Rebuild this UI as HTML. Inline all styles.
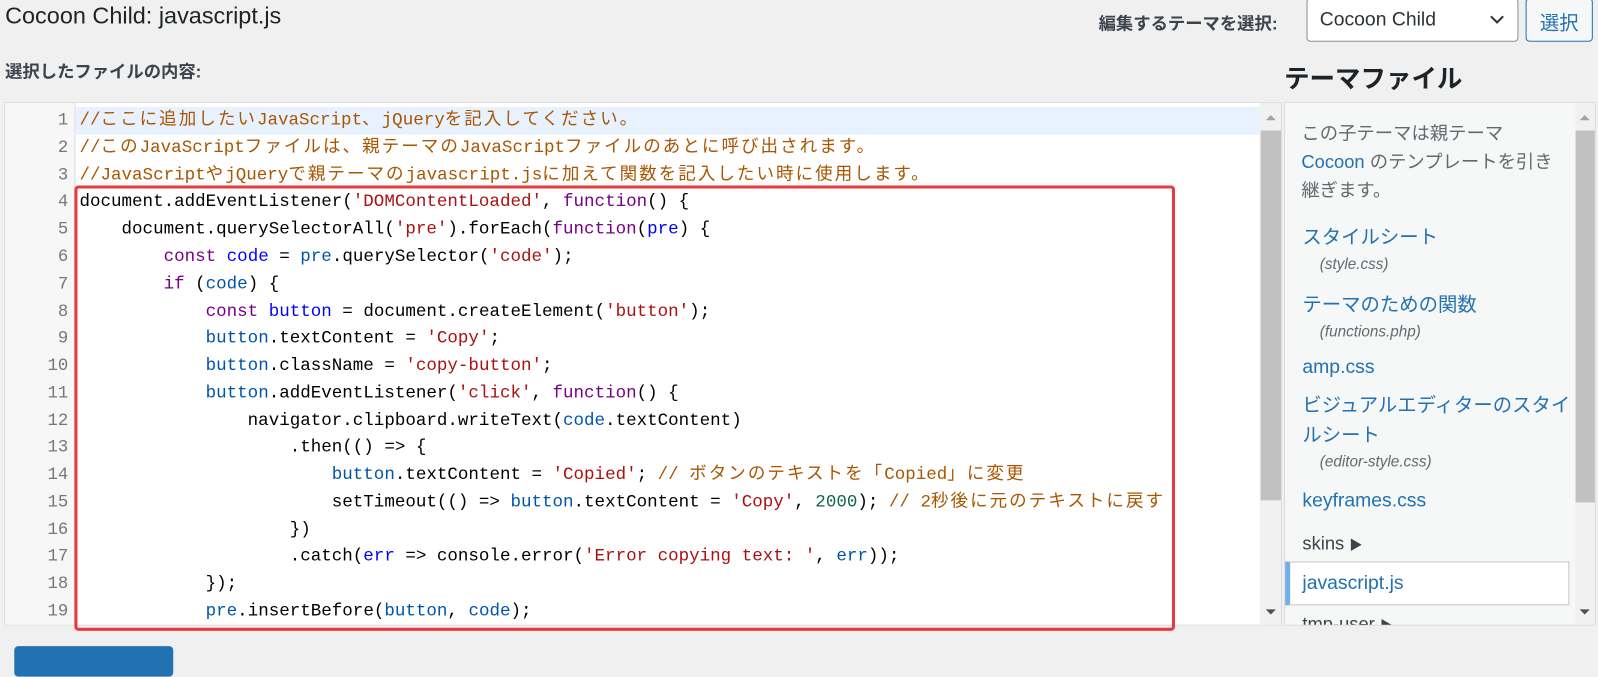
<!DOCTYPE html>
<html><head><meta charset="utf-8"><style>
body{margin:0;width:1598px;height:654px;background:#f0f0f1;overflow:hidden;font-family:"Liberation Sans","Noto Sans CJK JP",sans-serif;color:#1d2327}
#w{position:absolute;left:0;top:0;width:1568px;height:642px;transform:scale(1.0191);transform-origin:0 0}
.abs{position:absolute}
h1{position:absolute;left:5px;top:2px;margin:0;font-size:23px;font-weight:400}
.lbl{left:5px;top:56px;font-size:17px;font-weight:700;color:#3c434a}
.ed{left:4px;top:100px;width:1254px;height:514px;background:#fff;border:1px solid #dcdcde;box-sizing:border-box;overflow:hidden}
.gut{left:0;top:0;width:68px;height:514px;background:#f7f7f7;border-right:1px solid #ddd}
.ln{position:absolute;left:0;width:62px;text-align:right;font-family:"Liberation Mono",monospace;font-size:17px;color:#777;line-height:27px}
.cl{position:absolute;left:73px;white-space:pre;font-family:"Liberation Mono","Noto Sans CJK JP",monospace;font-size:17.2px;line-height:27px;color:#000}
.j{letter-spacing:2px}
.c{color:#a50}.s{color:#a11}.k{color:#708}.d{color:#00f}.v{color:#05a}
.side{left:1260px;top:100px;width:306px;height:514px;background:#f6f7f7;border:1px solid #dcdcde;box-sizing:border-box;overflow:hidden}
.sb a{color:#2271b1;text-decoration:none}
</style></head><body><div id="w">
<h1>Cocoon Child: javascript.js</h1>
<div class="abs lbl">選択したファイルの内容:</div>
<div class="abs" style="left:1078px;top:9px;font-size:17px;font-weight:700;color:#3c434a">編集するテーマを選択:</div>
<div class="abs" style="left:1282px;top:-2px;width:208px;height:43px;background:#fff;border:1px solid #8c8f94;border-radius:4px;box-sizing:border-box;font-size:19px;padding:10px 0 0 12px;color:#2c3338">Cocoon Child
<svg class="abs" style="left:178px;top:14px" width="16" height="12" viewBox="0 0 16 12"><path d="M2 3l6 6 6-6" stroke="#2c3338" stroke-width="2" fill="none"/></svg></div>
<div class="abs" style="left:1497px;top:-2px;width:66px;height:43px;border:1px solid #2271b1;border-radius:4px;box-sizing:border-box;background:#f6f7f7;color:#2271b1;font-size:19px;text-align:center;padding-top:9px">選択</div>
<div class="abs" style="left:1260px;top:58px;font-size:25px;font-weight:700">テーマファイル</div>

<div class="abs ed">
<div class="abs gut"></div>
<div class="abs" style="left:69px;top:4px;width:1162px;height:27px;background:#e8f2fe"></div>
<div class="ln" style="top:4px">1</div><div class="ln" style="top:31px">2</div><div class="ln" style="top:58px">3</div><div class="ln" style="top:84px">4</div><div class="ln" style="top:111px">5</div><div class="ln" style="top:138px">6</div><div class="ln" style="top:165px">7</div><div class="ln" style="top:192px">8</div><div class="ln" style="top:218px">9</div><div class="ln" style="top:245px">10</div><div class="ln" style="top:272px">11</div><div class="ln" style="top:299px">12</div><div class="ln" style="top:325px">13</div><div class="ln" style="top:352px">14</div><div class="ln" style="top:379px">15</div><div class="ln" style="top:406px">16</div><div class="ln" style="top:432px">17</div><div class="ln" style="top:459px">18</div><div class="ln" style="top:486px">19</div>
<div class="cl c" style="top:4px">//<span class="j">ここに追加したい</span>JavaScript<span class="j">、</span>jQuery<span class="j">を記入してください。</span></div>
<div class="cl c" style="top:31px">//<span class="j">この</span>JavaScript<span class="j">ファイルは、親テーマの</span>JavaScript<span class="j">ファイルのあとに呼び出されます。</span></div>
<div class="cl c" style="top:58px">//JavaScript<span class="j">や</span>jQuery<span class="j">で親テーマの</span>javascript.js<span class="j">に加えて関数を記入したい時に使用します。</span></div>
<div class="cl" style="top:84px">document.addEventListener(<span class="s">'DOMContentLoaded'</span>, <span class="k">function</span>() {</div>
<div class="cl" style="top:111px">    document.querySelectorAll(<span class="s">'pre'</span>).forEach(<span class="k">function</span>(<span class="d">pre</span>) {</div>
<div class="cl" style="top:138px">        <span class="k">const</span> <span class="d">code</span> = <span class="v">pre</span>.querySelector(<span class="s">'code'</span>);</div>
<div class="cl" style="top:165px">        <span class="k">if</span> (<span class="v">code</span>) {</div>
<div class="cl" style="top:192px">            <span class="k">const</span> <span class="d">button</span> = document.createElement(<span class="s">'button'</span>);</div>
<div class="cl" style="top:218px">            <span class="v">button</span>.textContent = <span class="s">'Copy'</span>;</div>
<div class="cl" style="top:245px">            <span class="v">button</span>.className = <span class="s">'copy-button'</span>;</div>
<div class="cl" style="top:272px">            <span class="v">button</span>.addEventListener(<span class="s">'click'</span>, <span class="k">function</span>() {</div>
<div class="cl" style="top:299px">                navigator.clipboard.writeText(<span class="v">code</span>.textContent)</div>
<div class="cl" style="top:325px">                    .then(() =&gt; {</div>
<div class="cl" style="top:352px">                        <span class="v">button</span>.textContent = <span class="s">'Copied'</span>; <span class="c">// <span class="j">ボタンのテキストを「</span>Copied<span class="j">」に変更</span></span></div>
<div class="cl" style="top:379px">                        setTimeout(() =&gt; <span class="v">button</span>.textContent = <span class="s">'Copy'</span>, <span style="color:#164">2000</span>); <span class="c">// 2<span class="j">秒後に元のテキストに戻す</span></span></div>
<div class="cl" style="top:406px">                    })</div>
<div class="cl" style="top:432px">                    .catch(<span class="d">err</span> =&gt; console.error(<span class="s">'Error copying text: '</span>, <span class="v">err</span>));</div>
<div class="cl" style="top:459px">            });</div>
<div class="cl" style="top:486px">            <span class="v">pre</span>.insertBefore(<span class="v">button</span>, <span class="v">code</span>);</div>
<div class="abs" style="left:1231px;top:0;width:22px;height:514px;background:#f1f1f1"></div>
<div class="abs" style="left:1232px;top:27px;width:20px;height:363px;background:#c1c1c1"></div>
<svg class="abs" style="left:1236px;top:10px" width="12" height="8"><path d="M1 7L6 2 11 7Z" fill="#a3a3a3"/></svg>
<svg class="abs" style="left:1236px;top:496px" width="12" height="8"><path d="M1 1L6 6 11 1Z" fill="#505050"/></svg>
</div>
<div class="abs" style="left:73px;top:182px;width:1080px;height:437px;border:3px solid #e8393d;border-radius:4px;box-sizing:border-box"></div>

<div class="abs side sb">
<div class="abs" style="left:16px;top:16px;width:260px;font-size:18px;line-height:28px;color:#646970">この子テーマは親テーマ <a>Cocoon</a> のテンプレートを引き継ぎます。</div>
<div class="abs" style="left:17px;top:117px;font-size:19px"><a>スタイルシート</a></div>
<div class="abs" style="left:34px;top:150px;font-size:15px;font-style:italic;color:#646970">(style.css)</div>
<div class="abs" style="left:17px;top:183px;font-size:19px"><a>テーマのための関数</a></div>
<div class="abs" style="left:34px;top:216px;font-size:15px;font-style:italic;color:#646970">(functions.php)</div>
<div class="abs" style="left:17px;top:249px;font-size:19px"><a>amp.css</a></div>
<div class="abs" style="left:17px;top:283px;width:270px;font-size:19px;line-height:29px"><a>ビジュアルエディターのスタイルシート</a></div>
<div class="abs" style="left:34px;top:344px;font-size:15px;font-style:italic;color:#646970">(editor-style.css)</div>
<div class="abs" style="left:17px;top:380px;font-size:19px"><a>keyframes.css</a></div>
<div class="abs" style="left:17px;top:422px;font-size:18px;color:#3c434a">skins <span style="font-size:13px">▶</span></div>
<div class="abs" style="left:0;top:450px;width:279px;height:43px;background:#fff;border:1px solid #c3c4c7;border-left:5px solid #72aee6;box-sizing:border-box"></div>
<div class="abs" style="left:17px;top:461px;font-size:19px"><a>javascript.js</a></div>
<div class="abs" style="left:17px;top:501px;font-size:18px;color:#3c434a">tmp-user <span style="font-size:13px">▶</span></div>
<div class="abs" style="left:285px;top:0;width:20px;height:514px;background:#f1f1f1"></div>
<div class="abs" style="left:285px;top:27px;width:19px;height:365px;background:#c1c1c1"></div>
<svg class="abs" style="left:288px;top:10px" width="12" height="8"><path d="M1 7L6 2 11 7Z" fill="#a3a3a3"/></svg>
<svg class="abs" style="left:288px;top:496px" width="12" height="8"><path d="M1 1L6 6 11 1Z" fill="#505050"/></svg>
</div>
<div class="abs" style="left:14px;top:634px;width:156px;height:30px;background:#2271b1;border-radius:4px"></div>
</div></body></html>
